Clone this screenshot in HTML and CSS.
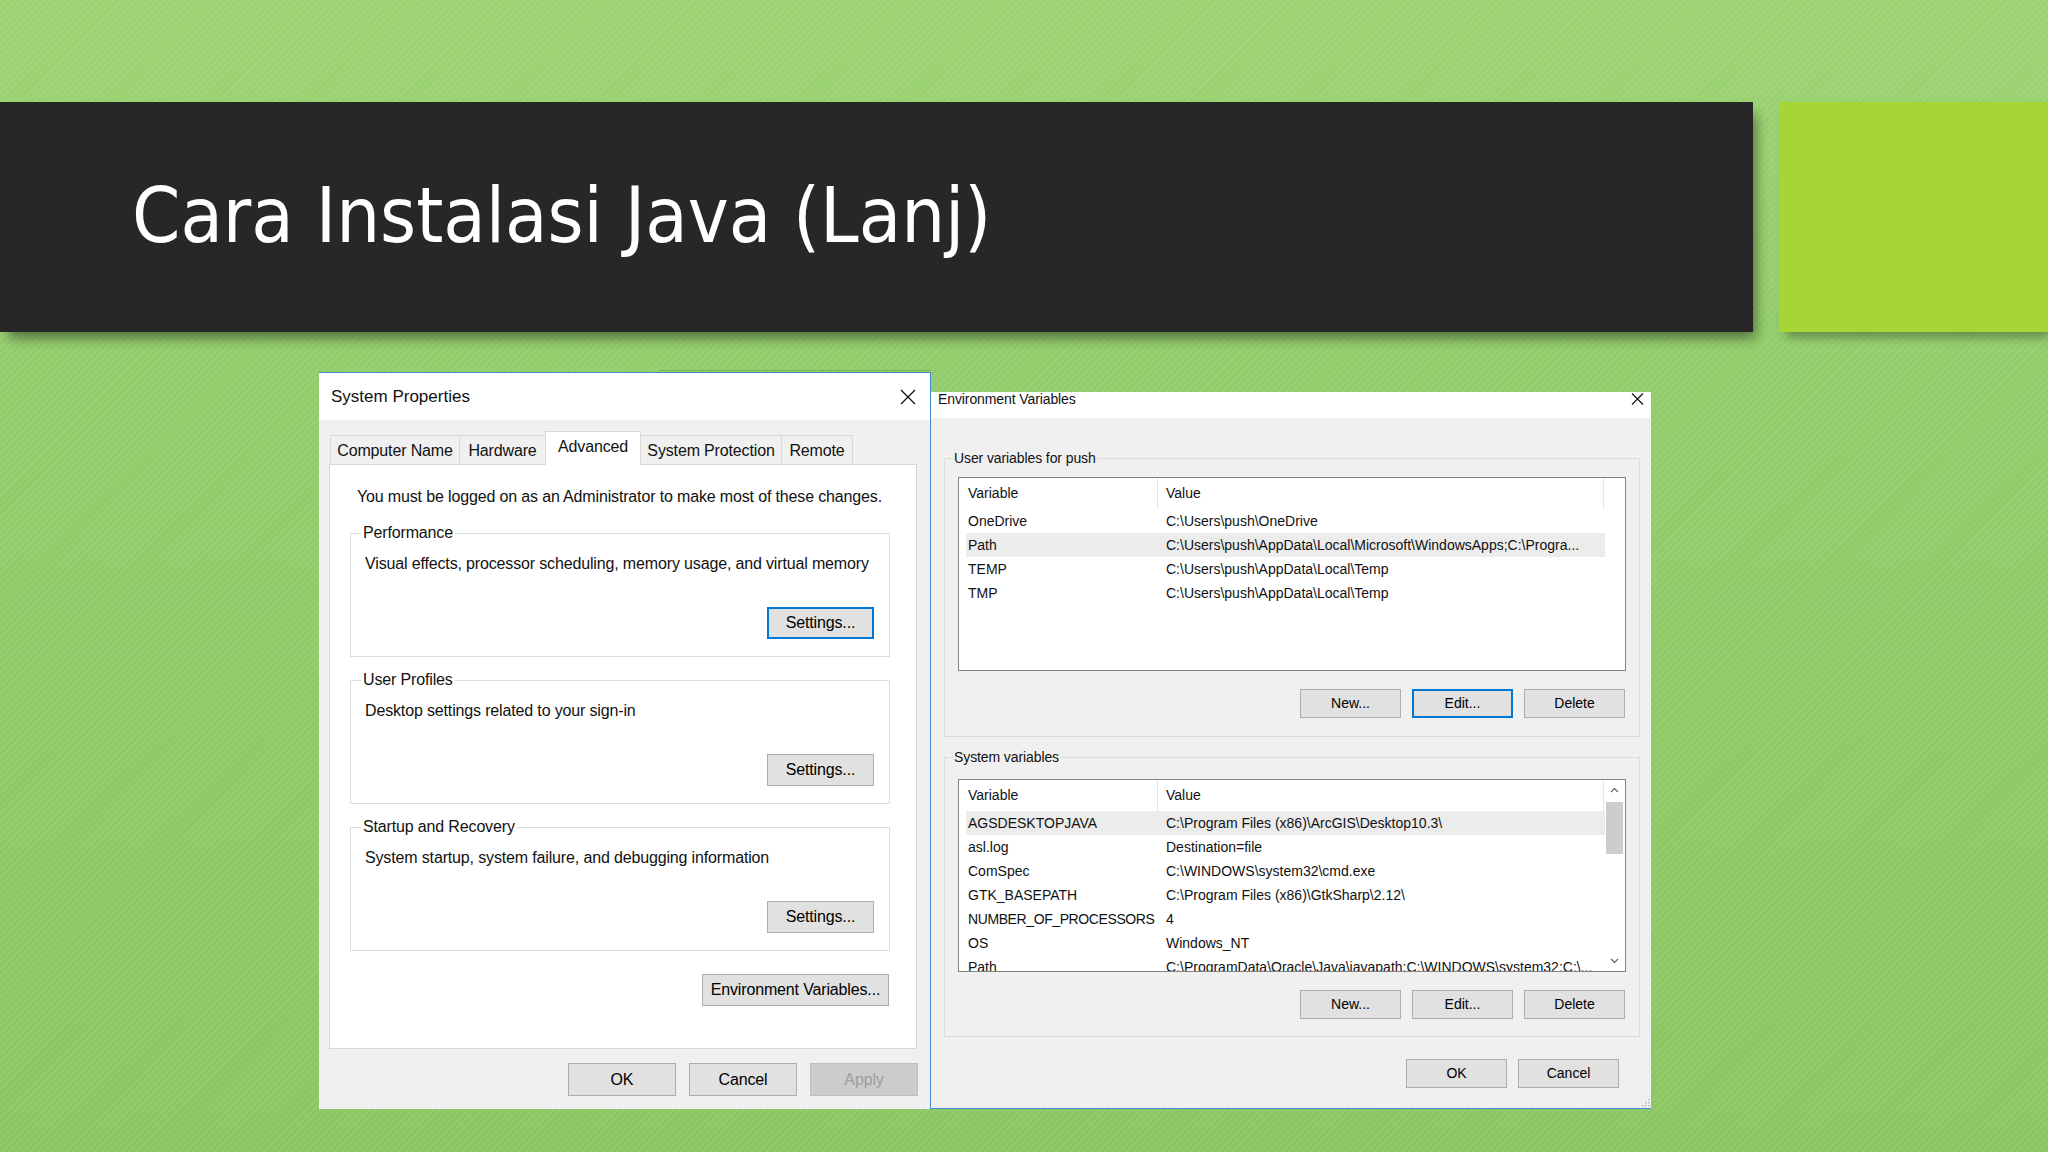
FILE: index.html
```html
<!DOCTYPE html>
<html lang="id">
<head>
<meta charset="utf-8">
<title>Cara Instalasi Java (Lanj)</title>
<link rel="stylesheet" href="styles.css">
</head>
<body>
<div class="slide">
  <header class="slide-head">
    <div class="title-bar"><h1 class="title">Cara Instalasi Java (Lanj)</h1></div>
    <div class="accent"></div>
  </header>

  <main class="stage">
    <section class="sys">
      <div class="sys-titlebar">
        <span class="sys-title">System Properties</span>
        <svg class="sys-close" width="16" height="16" viewBox="0 0 16 16"><path d="M1 1L15 15M15 1L1 15" stroke="#111" stroke-width="1.3" fill="none"/></svg>
      </div>
      <div class="sys-body">
        <div class="tabs">
          <div class="tab tab-cn">Computer Name</div>
          <div class="tab tab-hw">Hardware</div>
          <div class="tab tab-adv active">Advanced</div>
          <div class="tab tab-sp">System Protection</div>
          <div class="tab tab-rm">Remote</div>
        </div>
        <div class="panel">
          <p class="notice">You must be logged on as an Administrator to make most of these changes.</p>
          <fieldset class="group">
            <legend>Performance</legend>
            <p class="desc">Visual effects, processor scheduling, memory usage, and virtual memory</p>
            <div class="btn-row"><button class="btn btn-settings btn-focus">Settings...</button></div>
          </fieldset>
          <fieldset class="group">
            <legend>User Profiles</legend>
            <p class="desc">Desktop settings related to your sign-in</p>
            <div class="btn-row"><button class="btn btn-settings">Settings...</button></div>
          </fieldset>
          <fieldset class="group">
            <legend>Startup and Recovery</legend>
            <p class="desc">System startup, system failure, and debugging information</p>
            <div class="btn-row"><button class="btn btn-settings">Settings...</button></div>
          </fieldset>
          <div class="envvars-row"><button class="btn btn-envvars">Environment Variables...</button></div>
        </div>
        <div class="sys-actions">
          <button class="btn btn-action">OK</button>
          <button class="btn btn-action">Cancel</button>
          <button class="btn btn-action btn-disabled">Apply</button>
        </div>
      </div>
    </section>

    <section class="env">
      <div class="env-titlebar">
        <span class="env-title">Environment Variables</span>
        <svg class="env-close" width="13" height="12" viewBox="0 0 13 12"><path d="M1 0.5L12 11.5M12 0.5L1 11.5" stroke="#111" stroke-width="1.1" fill="none"/></svg>
      </div>
      <div class="env-body">
        <fieldset class="vgroup vgroup-user">
          <legend>User variables for push</legend>
          <div class="varlist varlist-user">
            <div class="vl-table">
              <div class="vl-head"><span class="c1">Variable</span><span class="c2">Value</span></div>
              <div class="vl-row"><span class="c1">OneDrive</span><span class="c2">C:\Users\push\OneDrive</span></div>
              <div class="vl-row sel"><span class="c1">Path</span><span class="c2">C:\Users\push\AppData\Local\Microsoft\WindowsApps;C:\Progra...</span></div>
              <div class="vl-row"><span class="c1">TEMP</span><span class="c2">C:\Users\push\AppData\Local\Temp</span></div>
              <div class="vl-row"><span class="c1">TMP</span><span class="c2">C:\Users\push\AppData\Local\Temp</span></div>
            </div>
          </div>
          <div class="vbtns">
            <button class="btn btn-v">New...</button>
            <button class="btn btn-v btn-focus">Edit...</button>
            <button class="btn btn-v">Delete</button>
          </div>
        </fieldset>

        <fieldset class="vgroup vgroup-sys">
          <legend>System variables</legend>
          <div class="varlist varlist-sys">
            <div class="vl-table">
              <div class="vl-head"><span class="c1">Variable</span><span class="c2">Value</span></div>
              <div class="vl-row sel"><span class="c1">AGSDESKTOPJAVA</span><span class="c2">C:\Program Files (x86)\ArcGIS\Desktop10.3\</span></div>
              <div class="vl-row"><span class="c1">asl.log</span><span class="c2">Destination=file</span></div>
              <div class="vl-row"><span class="c1">ComSpec</span><span class="c2">C:\WINDOWS\system32\cmd.exe</span></div>
              <div class="vl-row"><span class="c1">GTK_BASEPATH</span><span class="c2">C:\Program Files (x86)\GtkSharp\2.12\</span></div>
              <div class="vl-row"><span class="c1 c1-long">NUMBER_OF_PROCESSORS</span><span class="c2">4</span></div>
              <div class="vl-row"><span class="c1">OS</span><span class="c2">Windows_NT</span></div>
              <div class="vl-row"><span class="c1">Path</span><span class="c2">C:\ProgramData\Oracle\Java\javapath;C:\WINDOWS\system32;C:\...</span></div>
            </div>
            <div class="vscroll">
              <div class="sb-arrow"><svg width="9" height="6" viewBox="0 0 9 6"><path d="M1 5L4.5 1.5L8 5" stroke="#606060" stroke-width="1.2" fill="none"/></svg></div>
              <div class="sb-thumb"></div>
              <div class="sb-track"></div>
              <div class="sb-arrow"><svg width="9" height="6" viewBox="0 0 9 6"><path d="M1 1L4.5 4.5L8 1" stroke="#606060" stroke-width="1.2" fill="none"/></svg></div>
            </div>
          </div>
          <div class="vbtns">
            <button class="btn btn-v">New...</button>
            <button class="btn btn-v">Edit...</button>
            <button class="btn btn-v">Delete</button>
          </div>
        </fieldset>

        <div class="env-actions">
          <button class="btn btn-v">OK</button>
          <button class="btn btn-v">Cancel</button>
        </div>
      </div>
      <svg class="grip" width="10" height="10" viewBox="0 0 10 10"><g fill="#b5b5b5"><rect x="8" y="2" width="1.5" height="1.5"/><rect x="5" y="5" width="1.5" height="1.5"/><rect x="8" y="5" width="1.5" height="1.5"/><rect x="2" y="8" width="1.5" height="1.5"/><rect x="5" y="8" width="1.5" height="1.5"/><rect x="8" y="8" width="1.5" height="1.5"/></g></svg>
    </section>
  </main>
</div>
</body>
</html>
```

FILE: styles.css
```css
* { box-sizing: border-box; }

html, body { margin: 0; padding: 0; }

body {
  width: 2048px;
  height: 1152px;
  overflow: hidden;
  background-color: #8fca67;
  background-image:
    repeating-linear-gradient(135deg, rgba(255,255,255,0.07) 0px, rgba(255,255,255,0.07) 2px, rgba(0,0,0,0) 2px, rgba(0,0,0,0) 5px),
    linear-gradient(180deg, #9cd373 0%, #93cd6b 30%, #8bc663 100%);
  font-family: "Liberation Sans", Arial, sans-serif;
  color: #000;
}

.slide { padding-top: 102px; }

.slide-head {
  display: flex;
  height: 230px;
}

.title-bar {
  width: 1753px;
  height: 230px;
  background: #272727;
  padding: 75px 0 0 132px;
  box-shadow: 6px 9px 12px -3px rgba(0,0,0,0.45);
}

.title {
  margin: 0;
  font-family: "DejaVu Sans Condensed", "DejaVu Sans", sans-serif;
  font-stretch: semi-condensed;
  font-weight: 400;
  font-size: 77px;
  line-height: 77px;
  color: #ffffff;
  white-space: nowrap;
}

.accent {
  width: 269px;
  height: 230px;
  margin-left: 26px;
  background: #a6d535;
  box-shadow: 4px 8px 10px -3px rgba(0,0,0,0.35);
}

.stage {
  display: flex;
  align-items: flex-start;
  margin: 40px 0 0 319px;
}

/* ---------- System Properties ---------- */
.sys {
  width: 612px;
  height: 737px;
  flex: none;
  position: relative;
  background: #f0f0f0;
  border-top: 1px solid #3c8dd5;
  border-right: 1px solid #3c8dd5;
  display: flex;
  flex-direction: column;
  font-size: 16px;
  line-height: 22px;
  letter-spacing: -0.15px;
}

/* faint dotted remnant of a window edge above the dialog */
.sys::before {
  content: "";
  position: absolute;
  top: -3px;
  left: 340px;
  width: 271px;
  border-top: 1px dotted rgba(40, 90, 160, 0.55);
}

.sys-titlebar {
  height: 47px;
  flex: none;
  background: #ffffff;
  display: flex;
  align-items: center;
  justify-content: space-between;
  padding: 0 14px 0 12px;
}

.sys-title { font-size: 17px; line-height: 24px; letter-spacing: 0; color: #111; }

.sys-body {
  flex: 1;
  padding: 11px 12px 0 10px;
  display: flex;
  flex-direction: column;
}

.tabs {
  display: flex;
  align-items: flex-end;
  height: 34px;
  margin-bottom: -1px;
  padding-left: 1px;
  position: relative;
  z-index: 1;
}

.tab {
  height: 29px;
  margin-bottom: 1px;
  margin-right: -1px;
  border: 1px solid #d9d9d9;
  border-bottom: none;
  background: #f0f0f0;
  padding-top: 4px;
  text-align: center;
  white-space: nowrap;
  color: #111;
}

.tab.active {
  height: 34px;
  margin-bottom: 0;
  background: #ffffff;
}

.tab-cn { width: 130px; }
.tab-hw { width: 87px; }
.tab-adv { width: 96px; }
.tab-sp { width: 142px; }
.tab-rm { width: 72px; }

.panel {
  width: 588px;
  height: 585px;
  flex: none;
  background: #ffffff;
  border: 1px solid #d9d9d9;
  padding: 21px 26px 0 20px;
  display: flex;
  flex-direction: column;
}

.notice {
  margin: 0 0 0 7px;
  white-space: nowrap;
  color: #111;
}

.group {
  margin: 14px 0 0;
  height: 135px;
  min-width: 0;
  border: 1px solid #dcdcdc;
  padding: 0 15px 0 14px;
}

.group + .group { margin-top: 12px; }

.group legend {
  padding: 0 2px;
  margin-left: -4px;
  line-height: 22px;
  color: #111;
}

.desc {
  margin: 9px 0 0;
  white-space: nowrap;
  color: #111;
}

.btn-row {
  margin-top: 32px;
  display: flex;
  justify-content: flex-end;
}

.btn {
  font: inherit;
  letter-spacing: inherit;
  color: #000;
  background: #e1e1e1;
  border: 1px solid #adadad;
  border-radius: 0;
  padding: 0;
  margin: 0;
  display: inline-flex;
  align-items: center;
  justify-content: center;
  white-space: nowrap;
}

.btn-focus { border: 2px solid #0078d7; }

.btn-settings { width: 107px; height: 32px; }

.envvars-row {
  display: flex;
  justify-content: flex-end;
  margin-top: 23px;
  padding-right: 1px;
}

.btn-envvars { width: 187px; height: 32px; }

.sys-actions {
  display: flex;
  justify-content: flex-end;
  gap: 13px;
  margin-top: 14px;
}

.btn-action { width: 108px; height: 33px; }

.btn-disabled {
  background: #cccccc;
  border-color: #bfbfbf;
  color: #9d9d9d;
}

/* ---------- Environment Variables ---------- */
.env {
  width: 721px;
  height: 717px;
  flex: none;
  margin-top: 20px;
  margin-left: -1px;
  background: #f0f0f0;
  border-left: 1px solid #3c8dd5;
  border-bottom: 1px solid #3c8dd5;
  display: flex;
  flex-direction: column;
  font-size: 14px;
  line-height: 19px;
  letter-spacing: 0;
  position: relative;
}

.env-titlebar {
  height: 26px;
  flex: none;
  background: #ffffff;
  display: flex;
  justify-content: space-between;
  align-items: flex-start;
  padding: 0 7px;
}

.env-title { line-height: 14px; letter-spacing: -0.1px; color: #111; }
.env-close { margin-top: 1px; }

.env-body {
  flex: 1;
  padding: 0 11px 0 13px;
  display: flex;
  flex-direction: column;
}

.vgroup {
  margin: 32px 0 0;
  min-width: 0;
  border: 1px solid #dcdcdc;
  padding: 0 13px 18px 13px;
}

.vgroup-sys { margin-top: 12px; padding-bottom: 17px; }

.vgroup legend {
  padding: 0 1px;
  margin-left: -5px;
  line-height: 16px;
  letter-spacing: -0.1px;
  color: #111;
}

.varlist {
  margin-top: 11px;
  height: 194px;
  background: #ffffff;
  border: 1px solid #828282;
  padding-left: 7px;
  overflow: hidden;
  display: flex;
}

.varlist-sys { margin-top: 14px; height: 193px; }

.vl-table { width: 639px; flex: none; }

.vl-head {
  height: 31px;
  line-height: 31px;
  display: flex;
}

.vl-head .c1 { border-right: 1px solid #e5e5e5; }
.vl-head .c2 { border-right: 1px solid #e5e5e5; margin-right: 1px; }

.vl-row {
  height: 24px;
  line-height: 25px;
  display: flex;
  white-space: nowrap;
}

.vl-row.sel { background: #ececec; }

.c1 { width: 192px; flex: none; padding-left: 2px; white-space: nowrap; color: #111; }
.c1-long { letter-spacing: -0.4px; }
.c2 { flex: 1; padding-left: 8px; overflow: hidden; white-space: nowrap; color: #111; }

.vscroll {
  width: 19px;
  flex: none;
  display: flex;
  flex-direction: column;
  align-items: center;
  background: #ffffff;
}

.sb-arrow {
  height: 20px;
  width: 17px;
  flex: none;
  display: flex;
  align-items: center;
  justify-content: center;
}

.sb-thumb {
  width: 17px;
  height: 52px;
  margin-top: 2px;
  background: #cdcdcd;
  flex: none;
}

.sb-track { flex: 1; }

.vbtns {
  display: flex;
  justify-content: flex-end;
  gap: 11px;
  margin-top: 18px;
  padding-right: 1px;
}

.btn-v { width: 101px; height: 29px; }

.env-actions {
  display: flex;
  justify-content: flex-end;
  gap: 11px;
  margin-top: 22px;
  padding-right: 21px;
}

.grip {
  position: absolute;
  right: 1px;
  bottom: 1px;
}
```
